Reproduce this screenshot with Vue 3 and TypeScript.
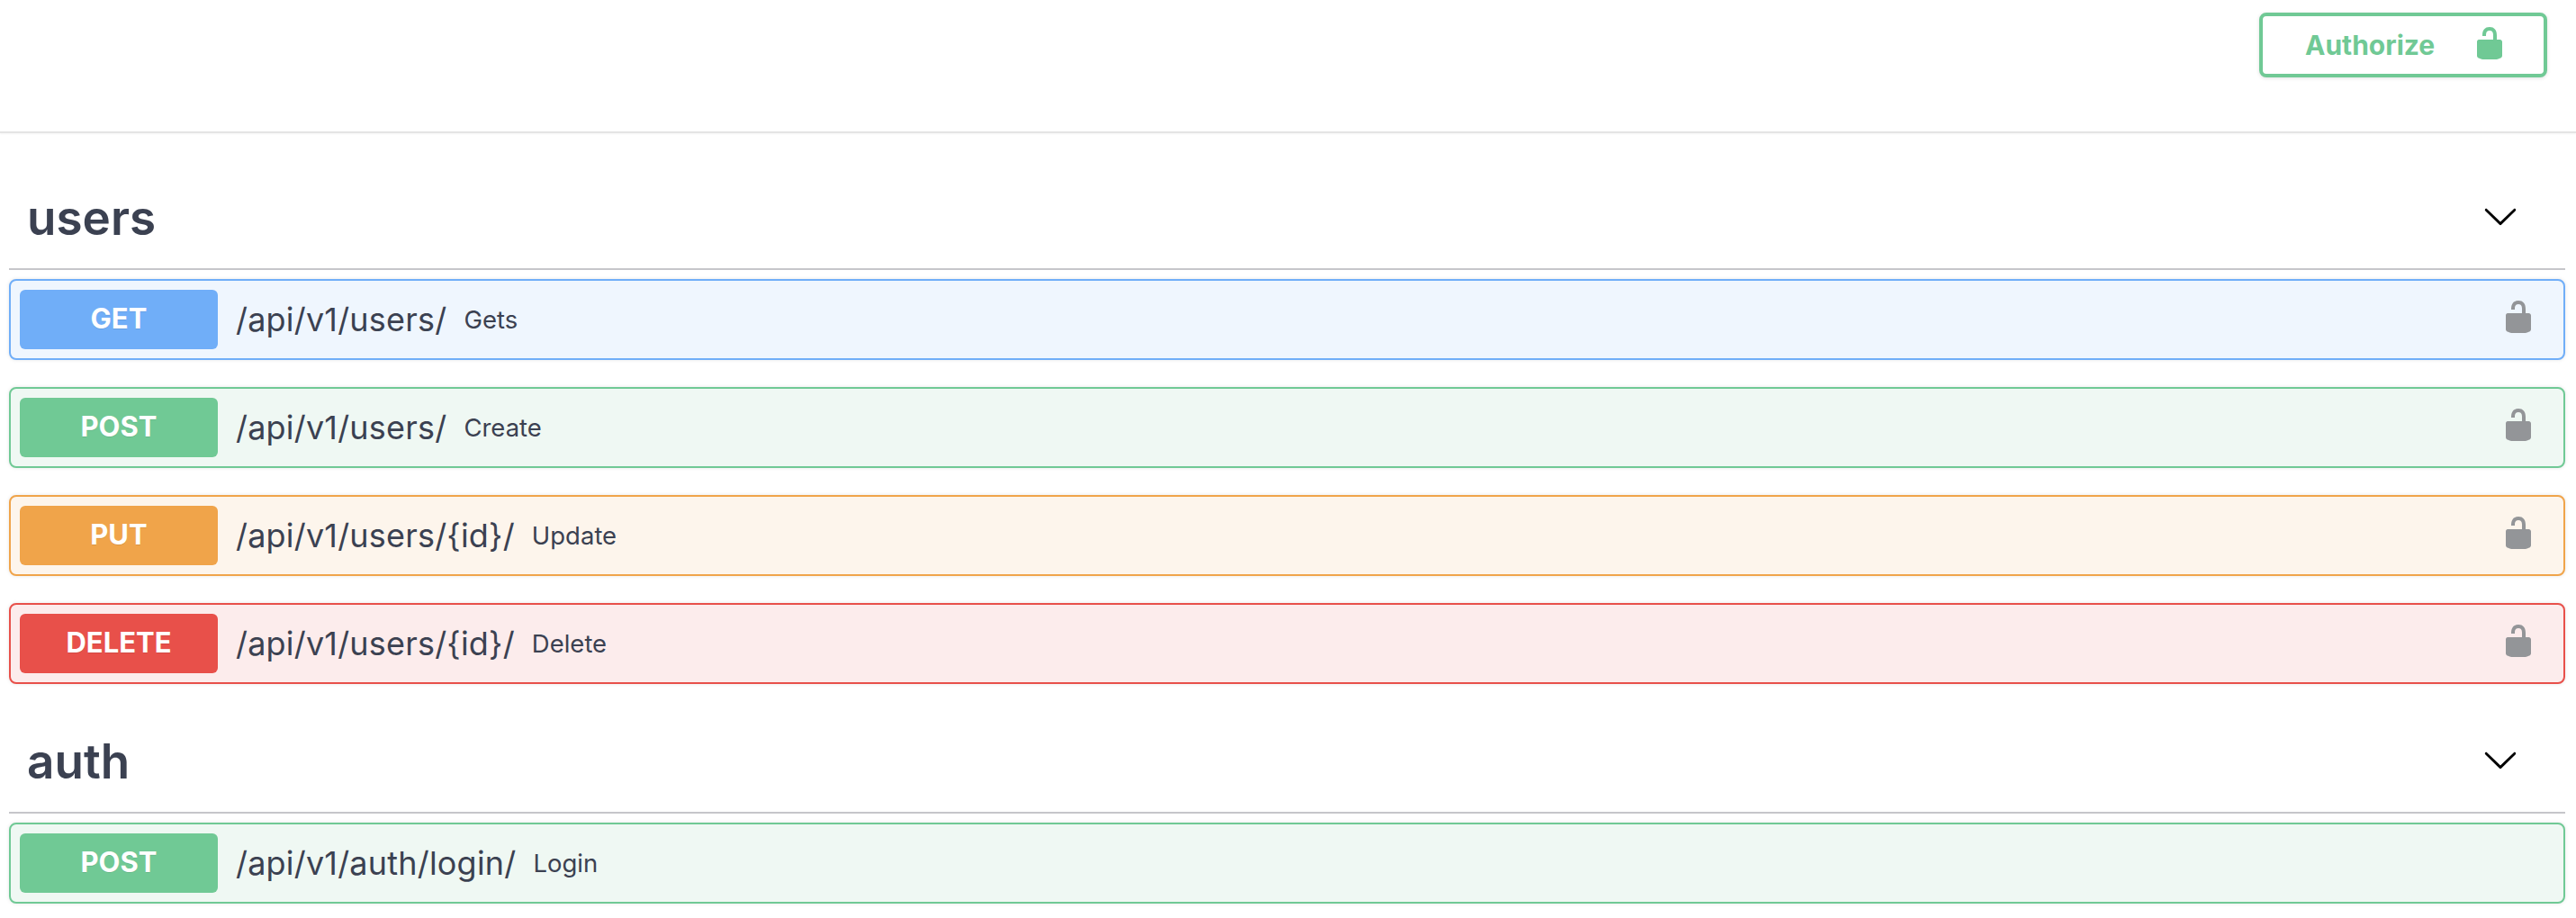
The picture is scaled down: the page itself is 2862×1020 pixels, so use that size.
<script setup lang="ts">
interface Operation {
  method: 'get' | 'post' | 'put' | 'delete'
  path: string
  summary: string
  locked: boolean
}

interface Tag {
  name: string
  operations: Operation[]
}

const tags: Tag[] = [
  {
    name: 'users',
    operations: [
      { method: 'get', path: '/api/v1/users/', summary: 'Gets', locked: true },
      { method: 'post', path: '/api/v1/users/', summary: 'Create', locked: true },
      { method: 'put', path: '/api/v1/users/{id}/', summary: 'Update', locked: true },
      { method: 'delete', path: '/api/v1/users/{id}/', summary: 'Delete', locked: true },
    ],
  },
  {
    name: 'auth',
    operations: [{ method: 'post', path: '/api/v1/auth/login/', summary: 'Login', locked: false }],
  },
]

const lockPath =
  'M15.8 8H14V5.6C14 2.703 12.665 1 10 1 7.334 1 6 2.703 6 5.6V6h2v-.801C8 3.754 8.797 3 10 3c1.203 0 2 .754 2 2.199V8H4c-.553 0-1 .646-1 1.199V17c0 .549.428 1.139.951 1.307l1.197.387C5.672 18.861 6.55 19 7.1 19h5.8c.549 0 1.428-.139 1.951-.307l1.196-.387c.524-.167.953-.757.953-1.306V9.199C17 8.646 16.352 8 15.8 8z'
const arrowPath =
  'M17.418 6.109c.272-.268.709-.268.979 0s.271.701 0 .969l-7.908 7.83c-.27.268-.707.268-.979 0l-7.908-7.83c-.27-.268-.27-.701 0-.969.271-.268.709-.268.979 0L10 13.25l7.418-7.141z'
</script>

<template>
  <div class="page">
    <header class="top">
      <button class="authorize" type="button">
        <span>Authorize</span>
        <svg class="auth-lock" viewBox="0 0 20 20"><path :d="lockPath" /></svg>
      </button>
    </header>

    <section v-for="tag in tags" :key="tag.name" class="tag">
      <div class="tag-head">
        <h3 class="tag-name">{{ tag.name }}</h3>
        <svg class="arrow" viewBox="0 0 20 20"><path :d="arrowPath" /></svg>
      </div>
      <div
        v-for="op in tag.operations"
        :key="op.method + op.path"
        :class="['op', op.method]"
      >
        <span class="method">{{ op.method.toUpperCase() }}</span>
        <span class="path">{{ op.path }}</span>
        <span class="summary">{{ op.summary }}</span>
        <svg v-if="op.locked" class="op-lock" viewBox="0 0 20 20"><path :d="lockPath" /></svg>
      </div>
    </section>
  </div>
</template>

<style>
html, body { margin: 0; background: #fff; }
</style>

<style scoped>
.page {
  width: 2862px;
  height: 1020px;
  overflow: hidden;
  font-family: Inter, "Noto Sans", sans-serif;
  color: #3b4151;
}

.top {
  height: 148px;
  box-sizing: border-box;
  padding: 14px 32px 0 0;
  display: flex;
  justify-content: flex-end;
  align-items: flex-start;
  border-bottom: 2px solid #e4e4e4;
  box-shadow: 0 1px 2px rgba(0, 0, 0, 0.04);
}

.authorize {
  width: 320px;
  height: 72px;
  display: flex;
  align-items: center;
  padding: 0 40px 0 47px;
  justify-content: space-between;
  background: #fff;
  border: 4px solid #70c995;
  border-radius: 8px;
  box-shadow: 0 1px 4px rgba(0, 0, 0, 0.12);
  color: #70c995;
  font-family: inherit;
  font-size: 30px;
  font-weight: 700;
}
.auth-lock { width: 40px; height: 40px; margin-bottom: 4px; fill: #70c995; }

.tag { padding: 0 12px 0 10px; }

.tag-head {
  height: 152px;
  box-sizing: border-box;
  padding: 0 52px 0 20px;
  display: flex;
  align-items: flex-end;
  justify-content: space-between;
  border-bottom: 2px solid #c6c6ca;
}
.tag-name {
  margin: 0 0 24px;
  font-size: 53px;
  font-weight: 600;
  line-height: 64px;
}
.arrow { width: 40px; height: 40px; margin-bottom: 38px; fill: #000; }

.tag + .tag .tag-head { height: 144px; }

.op {
  height: 90px;
  box-sizing: border-box;
  margin-top: 10px;
  margin-bottom: 30px;
  padding: 0 30px 0 10px;
  display: flex;
  align-items: center;
  border: 2px solid;
  border-radius: 8px;
  box-shadow: 0 0 4px rgba(0, 0, 0, 0.1);
}
.op + .op { margin-top: 0; }
.op:last-child { margin-bottom: 0; }

.method {
  width: 220px;
  height: 66px;
  box-sizing: border-box;
  padding-bottom: 4px;
  flex-shrink: 0;
  display: flex;
  align-items: center;
  justify-content: center;
  border-radius: 6px;
  color: #fff;
  font-size: 31px;
  font-weight: 700;
  text-shadow: 0 1px 0 rgba(0, 0, 0, 0.1);
}
.path { margin-left: 20px; font-size: 36px; font-weight: 400; letter-spacing: 0.2px; }
.summary { margin-left: 19px; font-size: 27.5px; font-weight: 400; }
.op-lock { width: 40px; height: 40px; margin-left: auto; margin-bottom: 6px; fill: #939598; }

.get { background: #eff6fe; border-color: #70aef8; }
.get .method { background: #70aef8; }
.post { background: #eff8f3; border-color: #70c995; }
.post .method { background: #70c995; }
.put { background: #fdf5ec; border-color: #f0a44a; }
.put .method { background: #f0a44a; }
.delete { background: #fcecec; border-color: #e8504a; }
.delete .method { background: #e8504a; }
</style>
